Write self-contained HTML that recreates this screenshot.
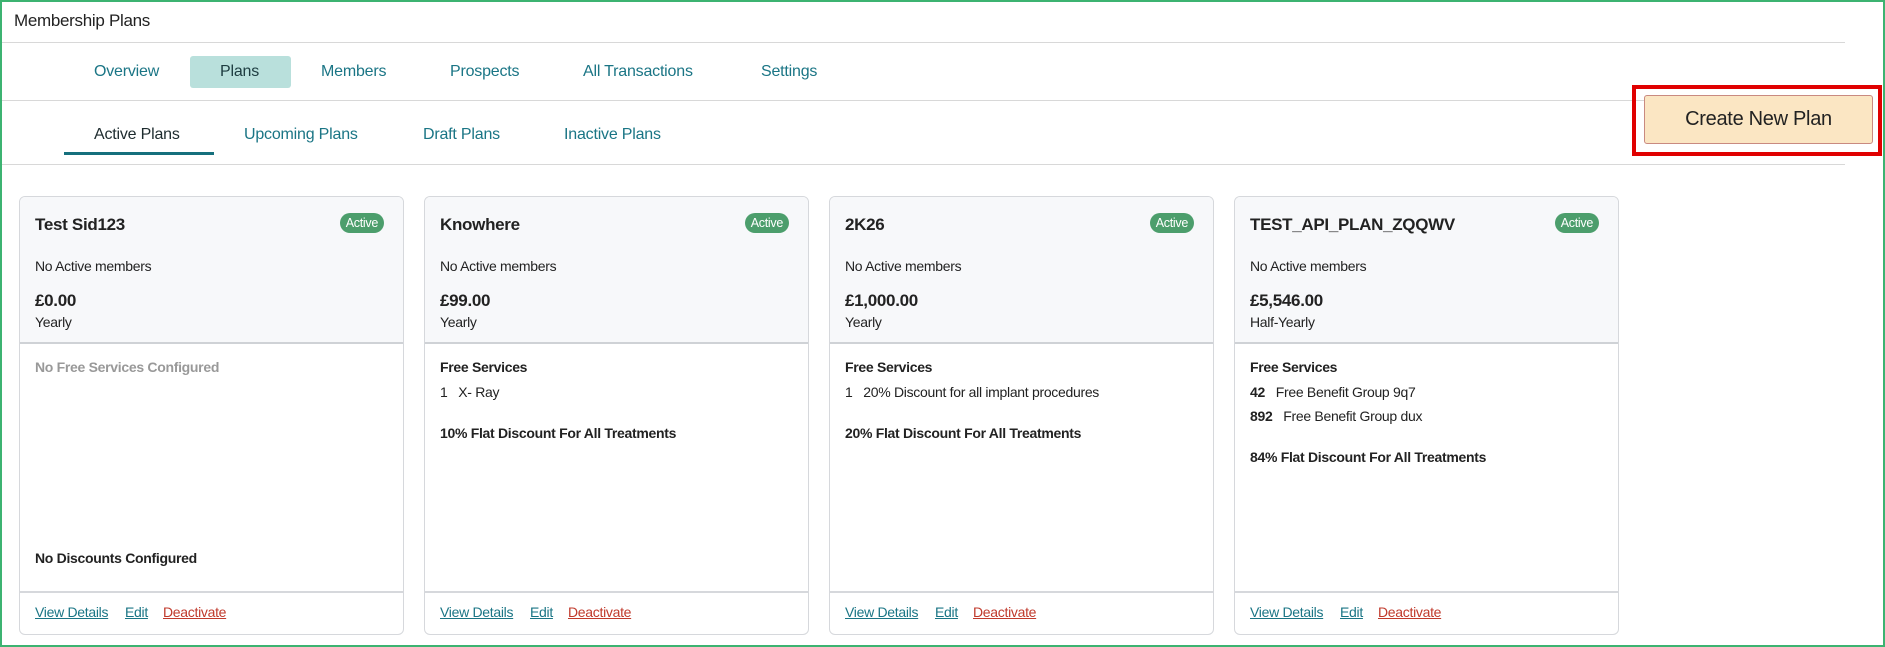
<!DOCTYPE html>
<html><head><meta charset="utf-8"><style>
*{margin:0;padding:0;box-sizing:border-box}
body{width:1885px;height:647px;background:#fff;font-family:"Liberation Sans",sans-serif;color:#222;position:relative;overflow:hidden}
.frame{position:absolute;left:0;top:0;width:1885px;height:647px;border:2px solid #3cb371}
.a{position:absolute;white-space:nowrap}
.hl{position:absolute;left:2px;height:1px;background:#d8d8d8}
.nav{top:63px;font-size:16px;color:#1a7585;letter-spacing:-0.2px}
.sub{top:126px;font-size:16px;color:#1a7585;letter-spacing:-0.2px}
.card{position:absolute;top:196px;width:385px;height:439px;border:1px solid #d6d8dc;border-radius:6px;overflow:hidden;background:#fff}
.head{position:absolute;left:0;top:0;right:0;height:147px;background:#f7f8fa;border-bottom:2px solid #cfd2d6}
.foot{position:absolute;left:0;right:0;top:394px;border-top:2px solid #d6d8dc}
.card .a{font-size:14px;letter-spacing:-0.3px}
.t{font-size:17px!important;font-weight:bold;left:15px;top:18px}
.badge{position:absolute;right:19px;top:16px;height:20px;padding:0 6px;background:#4c9e6c;color:#fff;border-radius:10px;font-size:12.5px;line-height:20px;letter-spacing:-0.3px}
.pr{font-size:17px!important;font-weight:bold}
.lk{top:407px;text-decoration:underline;color:#1a7585}
.red{color:#c0392b}
</style></head><body>
<div class="frame"></div>
<div class="a" style="left:14px;top:11px;font-size:17px;color:#222;letter-spacing:-0.3px">Membership Plans</div>
<div class="hl" style="top:42px;width:1843px"></div>
<div style="position:absolute;left:190px;top:56px;width:101px;height:32px;background:#b9e0dc;border-radius:3px"></div>
<div class="a nav" style="left:94px">Overview</div>
<div class="a nav" style="left:220px;color:#1d3c40">Plans</div>
<div class="a nav" style="left:321px">Members</div>
<div class="a nav" style="left:450px">Prospects</div>
<div class="a nav" style="left:583px">All Transactions</div>
<div class="a nav" style="left:761px">Settings</div>
<div class="hl" style="top:100px;width:1843px"></div>
<div class="a sub" style="left:94px;color:#1d2b2e">Active Plans</div>
<div style="position:absolute;left:64px;top:152px;width:150px;height:3px;background:#16707d"></div>
<div class="a sub" style="left:244px">Upcoming Plans</div>
<div class="a sub" style="left:423px">Draft Plans</div>
<div class="a sub" style="left:564px">Inactive Plans</div>
<div class="hl" style="top:164px;width:1843px"></div>
<div style="position:absolute;left:1632px;top:85px;width:250px;height:71px;border:4px solid #e00000"></div>
<div style="position:absolute;left:1644px;top:95px;width:229px;height:49px;background:#fbe6c3;border:1px solid #c98a80;border-radius:3px;font-size:20px;line-height:47px;text-align:center;color:#222;letter-spacing:-0.3px">Create New Plan</div>

<div class="card" style="left:19px">
<div class="head"></div><div class="foot"></div>
<div class="a t">Test Sid123</div><div class="badge">Active</div>
<div class="a" style="left:15px;top:61px">No Active members</div>
<div class="a pr" style="left:15px;top:94px">£0.00</div>
<div class="a" style="left:15px;top:117px">Yearly</div>
<div class="a" style="left:15px;top:162px;font-weight:bold;color:#999">No Free Services Configured</div>
<div class="a" style="left:15px;top:353px;font-weight:bold">No Discounts Configured</div>
<div class="a lk" style="left:15px">View Details</div><div class="a lk" style="left:105px">Edit</div><div class="a lk red" style="left:143px">Deactivate</div>
</div>

<div class="card" style="left:424px">
<div class="head"></div><div class="foot"></div>
<div class="a t">Knowhere</div><div class="badge">Active</div>
<div class="a" style="left:15px;top:61px">No Active members</div>
<div class="a pr" style="left:15px;top:94px">£99.00</div>
<div class="a" style="left:15px;top:117px">Yearly</div>
<div class="a" style="left:15px;top:162px;font-weight:bold">Free Services</div>
<div class="a" style="left:15px;top:187px">1&nbsp;&nbsp; X- Ray</div>
<div class="a" style="left:15px;top:228px;font-weight:bold">10% Flat Discount For All Treatments</div>
<div class="a lk" style="left:15px">View Details</div><div class="a lk" style="left:105px">Edit</div><div class="a lk red" style="left:143px">Deactivate</div>
</div>

<div class="card" style="left:829px">
<div class="head"></div><div class="foot"></div>
<div class="a t">2K26</div><div class="badge">Active</div>
<div class="a" style="left:15px;top:61px">No Active members</div>
<div class="a pr" style="left:15px;top:94px">£1,000.00</div>
<div class="a" style="left:15px;top:117px">Yearly</div>
<div class="a" style="left:15px;top:162px;font-weight:bold">Free Services</div>
<div class="a" style="left:15px;top:187px">1&nbsp;&nbsp; 20% Discount for all implant procedures</div>
<div class="a" style="left:15px;top:228px;font-weight:bold">20% Flat Discount For All Treatments</div>
<div class="a lk" style="left:15px">View Details</div><div class="a lk" style="left:105px">Edit</div><div class="a lk red" style="left:143px">Deactivate</div>
</div>

<div class="card" style="left:1234px">
<div class="head"></div><div class="foot"></div>
<div class="a t">TEST_API_PLAN_ZQQWV</div><div class="badge">Active</div>
<div class="a" style="left:15px;top:61px">No Active members</div>
<div class="a pr" style="left:15px;top:94px">£5,546.00</div>
<div class="a" style="left:15px;top:117px">Half-Yearly</div>
<div class="a" style="left:15px;top:162px;font-weight:bold">Free Services</div>
<div class="a" style="left:15px;top:187px"><b>42</b>&nbsp;&nbsp; Free Benefit Group 9q7</div>
<div class="a" style="left:15px;top:211px"><b>892</b>&nbsp;&nbsp; Free Benefit Group dux</div>
<div class="a" style="left:15px;top:252px;font-weight:bold">84% Flat Discount For All Treatments</div>
<div class="a lk" style="left:15px">View Details</div><div class="a lk" style="left:105px">Edit</div><div class="a lk red" style="left:143px">Deactivate</div>
</div>
</body></html>
